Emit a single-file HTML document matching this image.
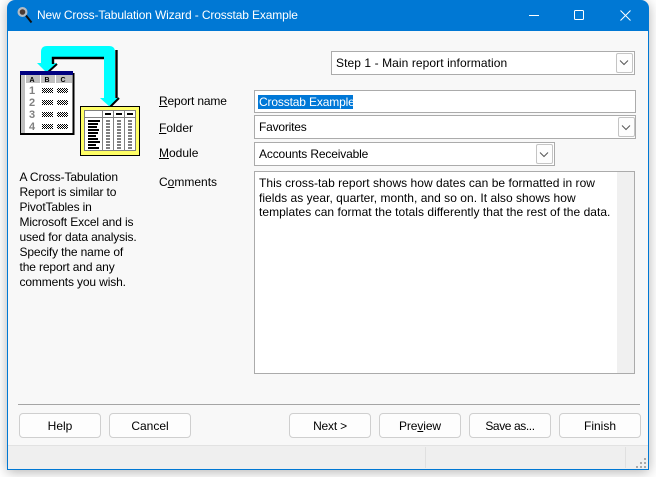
<!DOCTYPE html>
<html><head><meta charset="utf-8"><style>
html,body{margin:0;padding:0;background:#fff;width:656px;height:477px;overflow:hidden}
body{font-family:"Liberation Sans",sans-serif;font-size:12px;color:#000;position:relative}
.a{position:absolute}
.t{position:absolute;white-space:nowrap;line-height:15px}
.win{position:absolute;left:7px;top:0;width:642px;height:470px;background:#f8f8f8;border-radius:8px 8px 0 0;box-shadow:0 2px 12px rgba(0,0,0,.3)}
.box{position:absolute;background:#fff;border:1px solid #ababab;box-sizing:border-box}
.dd{position:absolute;width:17px;height:20px;background:#fdfdfd;border:1px solid #c4c4c4;border-radius:2px;box-sizing:border-box}
.btn{position:absolute;top:413px;height:25px;width:82px;box-sizing:border-box;background:#fdfdfd;border:1px solid #cfcfcf;border-radius:4px;text-align:center;line-height:24px}
u{text-underline-offset:1px}
</style></head><body>
<div class="win"></div>
<div class="a" style="left:7px;top:0;width:642px;height:31px;background:#0078d4;border-radius:8px 8px 0 0"></div>
<div class="a" style="left:7px;top:31px;width:1px;height:439px;background:#0078d4"></div>
<div class="a" style="left:648px;top:31px;width:1px;height:439px;background:#0078d4"></div>
<div class="a" style="left:7px;top:469px;width:642px;height:1px;background:#0078d4"></div>
<svg class="a" style="left:16px;top:6px" width="18" height="18" viewBox="0 0 18 18"><circle cx="6.500" cy="6" r="5" fill="#b4bcc4"/><circle cx="6.500" cy="6" r="2.800" fill="#4a3a34"/><path d="M10 9.500l5.500 7" stroke="#111" stroke-width="2"/></svg>
<div class="t" style="left:37px;top:8px;color:#fff;font-size:12px;letter-spacing:-.13px">New Cross-Tabulation Wizard - Crosstab Example</div>
<svg class="a" style="left:520px;top:8px" width="125" height="18" viewBox="0 0 125 18" fill="none" stroke="#fff" stroke-width="1"><path d="M9 7.500H19"/><rect x="54.500" y="2.500" width="9" height="9" rx="1"/><path d="M100.500 2.500l10 10M110.500 2.500l-10 10"/></svg>

<svg class="a" style="left:18px;top:44px" width="124" height="114" viewBox="18 44 124 114">
<defs>
<pattern id="x" width="2" height="2" patternUnits="userSpaceOnUse"><rect width="1" height="1" fill="#000"/><rect x="1" y="1" width="1" height="1" fill="#000"/></pattern>
</defs>
<path d="M41 63V52Q41 46 47 46H109Q115 46 115 52V98H119L110 107L100 98H104V57H52V63H57L47 73L37 63Z" fill="#00ffff"/>
<path d="M53 64V58H104" fill="none" stroke="#000" stroke-width="2.400"/>
<path d="M116.500 50V98" stroke="#000" stroke-width="2.400"/>
<path d="M47 73L57 64M110 107L119 98" stroke="#000" stroke-width="2"/>
<g shape-rendering="crispEdges">
<rect x="20" y="72" width="53" height="62" fill="#fff"/>
<path d="M20.500 72V134.500H73" fill="none" stroke="#000"/>
<path d="M21 134H73.500V73" fill="none" stroke="#000" stroke-width="2"/>
<rect x="20" y="71" width="53" height="4" fill="#000080"/>
<rect x="21" y="75" width="51" height="8" fill="#c0c0c0"/>
<rect x="21" y="83" width="4" height="50" fill="#c0c0c0"/>
<path d="M25.500 75V83M40.500 75V83M55.500 75V83" stroke="#fff"/>
<rect x="42" y="88" width="11" height="5" fill="url(#x)"/><rect x="57" y="88" width="11" height="5" fill="url(#x)"/>
<rect x="42" y="100" width="11" height="5" fill="url(#x)"/><rect x="57" y="100" width="11" height="5" fill="url(#x)"/>
<rect x="42" y="112" width="11" height="5" fill="url(#x)"/><rect x="57" y="112" width="11" height="5" fill="url(#x)"/>
<rect x="42" y="124" width="11" height="5" fill="url(#x)"/><rect x="57" y="124" width="11" height="5" fill="url(#x)"/>
<rect x="80.500" y="106.500" width="59" height="49" fill="#ffff66" stroke="#000"/>
<rect x="84.500" y="110.500" width="51" height="40" fill="#fff" stroke="#808080"/>
<path d="M84.500 117.500H135.500M102.500 110.500V150.500M113.500 110.500V150.500M124.500 110.500V150.500" stroke="#808080" fill="none"/>
<path d="M105 114H111M116 114H122M127 114H133" stroke="#000" stroke-width="2"/>
<g fill="#000"><rect x="88" y="120" width="12" height="2"/><rect x="88" y="123" width="10" height="2"/><rect x="88" y="126" width="9" height="2"/><rect x="88" y="129" width="11" height="2"/><rect x="88" y="132" width="10" height="2"/><rect x="88" y="135" width="8" height="2"/><rect x="88" y="138" width="10" height="2"/><rect x="88" y="141" width="12" height="2"/><rect x="88" y="144" width="8" height="2"/><rect x="88" y="147" width="11" height="2"/></g>
<path d="M108 120V149M119 120V149M130 120V149" stroke="#808080" stroke-width="4" stroke-dasharray="2 1" fill="none"/>
</g>
<g fill="#000" font-family="Liberation Sans" font-size="7" font-weight="bold" text-anchor="middle"><text x="32" y="82">A</text><text x="47" y="82">B</text><text x="63" y="82">C</text></g>
<g fill="#808080" font-family="Liberation Sans" font-size="11" font-weight="bold" text-anchor="middle"><text x="32" y="94">1</text><text x="32" y="106">2</text><text x="32" y="118">3</text><text x="32" y="130">4</text></g>
</svg>

<div class="t" style="left:19.500px;top:170px;line-height:15px;letter-spacing:-.13px;width:125px">A Cross-Tabulation<br>Report is similar to<br>PivotTables in<br>Microsoft Excel and is<br>used for data analysis.<br>Specify the name of<br>the report and any<br>comments you wish.</div>

<div class="box" style="left:331px;top:51px;width:304px;height:24px"></div>
<div class="t" style="left:336px;top:55.500px;letter-spacing:.08px">Step 1 - Main report information</div>
<div class="dd" style="left:616px;top:53px"></div>

<div class="t" style="left:159px;top:94px;letter-spacing:-.15px"><u>R</u>eport name</div>
<div class="box" style="left:254px;top:90px;width:382px;height:23px"></div>
<div class="a" style="left:258px;top:95px;width:95px;height:14px;background:#0078d7"></div>
<div class="t" style="left:259px;top:94.500px;color:#fff;letter-spacing:-.15px">Crosstab Example</div>

<div class="t" style="left:159px;top:121px"><u>F</u>older</div>
<div class="box" style="left:254px;top:115px;width:382px;height:24px"></div>
<div class="t" style="left:259px;top:120px;letter-spacing:-.2px">Favorites</div>
<div class="dd" style="left:618px;top:117px"></div>

<div class="t" style="left:159px;top:146px"><u>M</u>odule</div>
<div class="box" style="left:254px;top:142px;width:301px;height:24px"></div>
<div class="t" style="left:259px;top:147px;letter-spacing:-.15px">Accounts Receivable</div>
<div class="dd" style="left:536px;top:144px"></div>

<div class="t" style="left:159px;top:175px">C<u>o</u>mments</div>
<div class="box" style="left:254px;top:171px;width:381px;height:203px"></div>
<div class="a" style="left:617px;top:172px;width:17px;height:201px;background:#f0f0f0"></div>
<div class="t" style="left:259px;top:176px;line-height:14.700px;letter-spacing:.03px">This cross-tab report shows how dates can be formatted in row<br>fields as year, quarter, month, and so on. It also shows how<br>templates can format the totals differently that the rest of the data.</div>

<svg class="a" style="left:0;top:0" width="656" height="477" fill="none" stroke="#555"><path d="M620 60.500l4 4 4-4M622 125.500l4 4 4-4M540 152.500l4 4 4-4"/></svg>

<div class="a" style="left:18px;top:404px;width:622px;height:1px;background:#a5a5a5"></div>
<div class="btn" style="left:19px">Help</div>
<div class="btn" style="left:109px">Cancel</div>
<div class="btn" style="left:289px;letter-spacing:-.2px">Next &gt;</div>
<div class="btn" style="left:379px;letter-spacing:-.1px">Pre<u>v</u>iew</div>
<div class="btn" style="left:469px;letter-spacing:-.4px">Save as...</div>
<div class="btn" style="left:559px">Finish</div>

<div class="a" style="left:8px;top:445px;width:640px;height:24px;background:#efefef;border-top:1px solid #e2e2e2;box-sizing:border-box"></div>
<div class="a" style="left:425px;top:447px;width:1px;height:21px;background:#e0e0e0"></div>
<div class="a" style="left:625px;top:447px;width:1px;height:21px;background:#e0e0e0"></div>
<svg class="a" style="left:636px;top:458px" width="11" height="10" fill="#a8a8a8"><rect x="8" y="0" width="2" height="2"/><rect x="4" y="4" width="2" height="2"/><rect x="8" y="4" width="2" height="2"/><rect x="0" y="8" width="2" height="2"/><rect x="4" y="8" width="2" height="2"/><rect x="8" y="8" width="2" height="2"/></svg>
</body></html>
